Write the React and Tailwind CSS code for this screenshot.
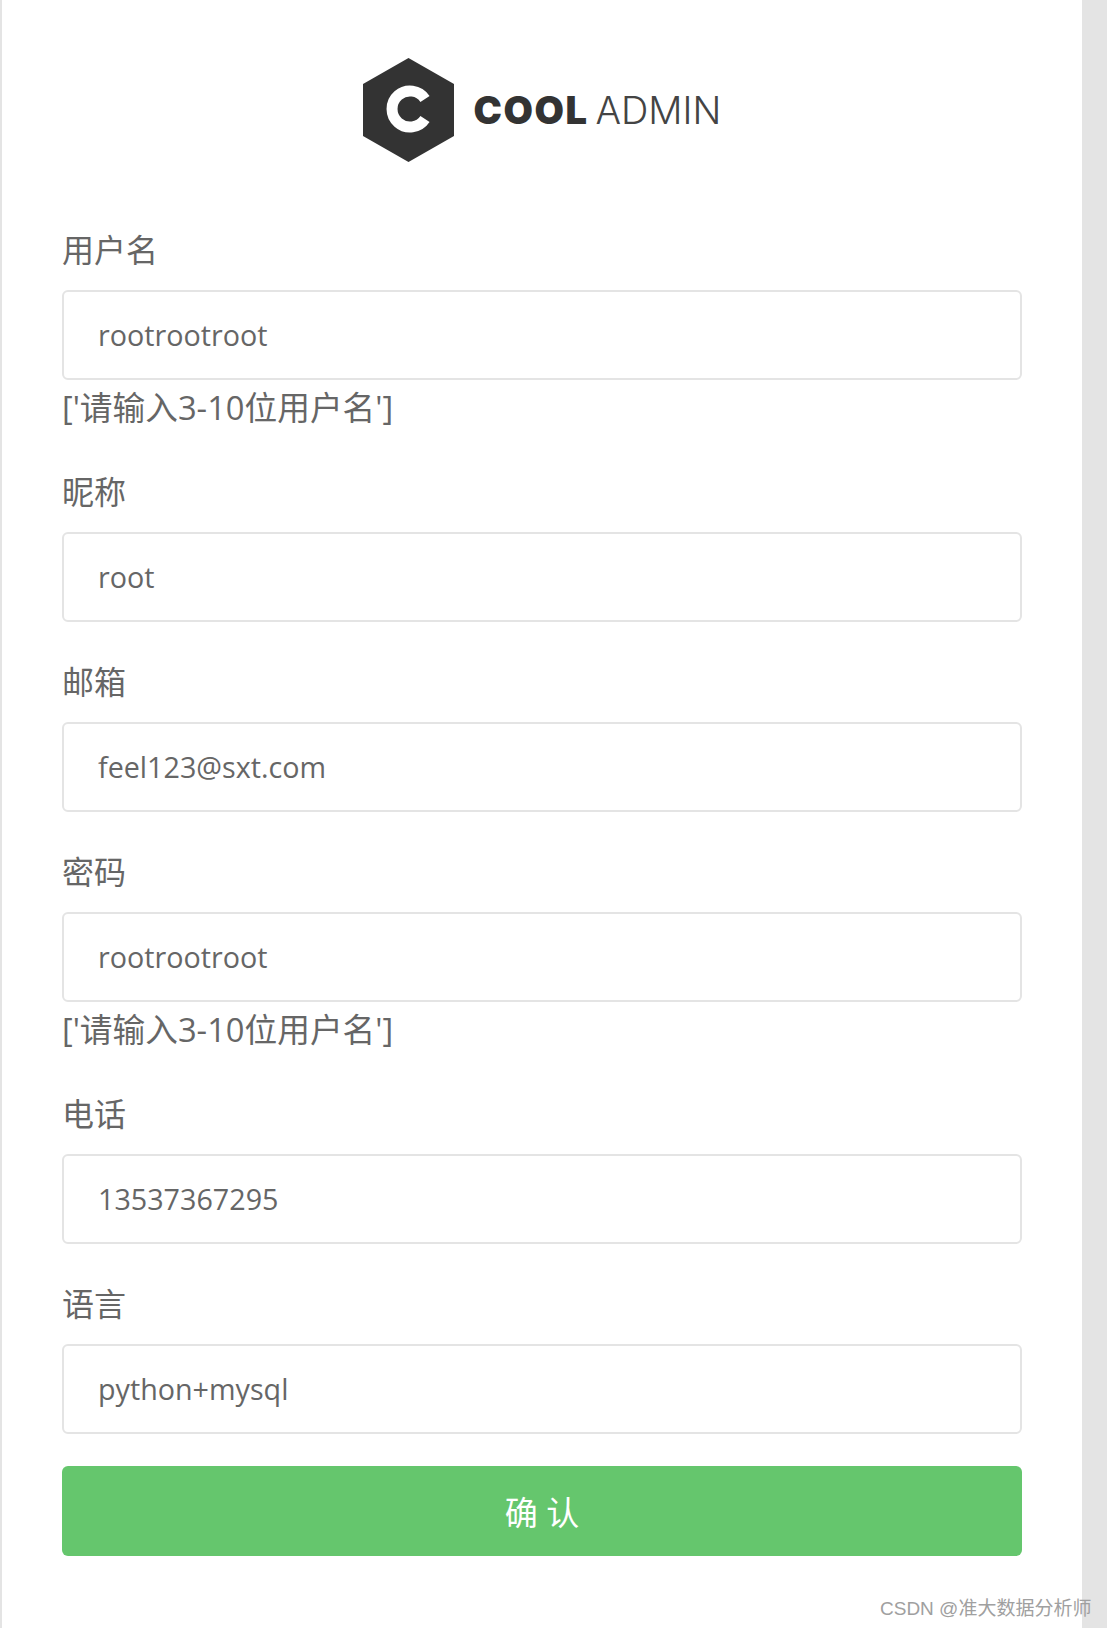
const cjk = '"Open Sans","Noto Sans CJK SC",sans-serif';

function Field({ label, value, error }) {
  return (
    <div className="flex flex-col">
      <label className="text-[32px] leading-[44px] h-[44px] mb-[18px] text-[#666]">{label}</label>
      <div className="h-[90px] border-2 border-[#e4e4e4] rounded-[6px] pl-[34px] flex items-center text-[28.7px] text-[#666] bg-white">
        {value}
      </div>
      {error ? (
        <div className="h-[52px] text-[32.7px] leading-[56px] text-[#666] whitespace-nowrap">{error}</div>
      ) : null}
    </div>
  );
}

function Logo() {
  return (
    <div className="h-[228px] flex items-start justify-center pt-[58px]">
      <div className="flex items-center">
        <svg width="91" height="104" viewBox="0 0 91 104">
          <polygon points="45.5,0 91,26 91,78 45.5,104 0,78 0,26" fill="#333" />
          <path d="M62 41 A18 18 0 1 0 62 61" fill="none" stroke="#fff" strokeWidth="11" />
        </svg>
        <div className="ml-[20px] flex items-baseline text-[#333] font-['Inter',sans-serif] text-[38px] leading-none">
          <span className="font-black tracking-[1.5px]">COOL</span>
          <span className="font-light ml-[7px] text-[#444]">ADMIN</span>
        </div>
      </div>
    </div>
  );
}

export default function App() {
  const err = "['请输入3-10位用户名']";
  return (
    <div className="relative h-[1628px] flex overflow-hidden bg-white" style={{ fontFamily: cjk }}>
      <div className="w-[2px] bg-[#e4e4e4]" />
      <main className="w-[1080px] px-[60px]">
        <Logo />
        <div className="flex flex-col gap-[38px]">
          <Field label="用户名" value="rootrootroot" error={err} />
          <Field label="昵称" value="root" />
          <Field label="邮箱" value="feel123@sxt.com" />
          <Field label="密码" value="rootrootroot" error={err} />
          <Field label="电话" value="13537367295" />
          <Field label="语言" value="python+mysql" />
        </div>
        <button className="mt-[32px] w-full h-[90px] pt-[3px] rounded-[6px] bg-[#65c66d] text-white text-[33px]">确 认</button>
      </main>
      <div className="flex-1 bg-[#e4e4e4]" />
      <div className="absolute left-[880px] top-[1595px] text-[19px] leading-[28px] text-[#a0a0a0] whitespace-nowrap font-['Liberation_Sans','Noto_Sans_CJK_SC',sans-serif]">CSDN @准大数据分析师</div>
    </div>
  );
}
